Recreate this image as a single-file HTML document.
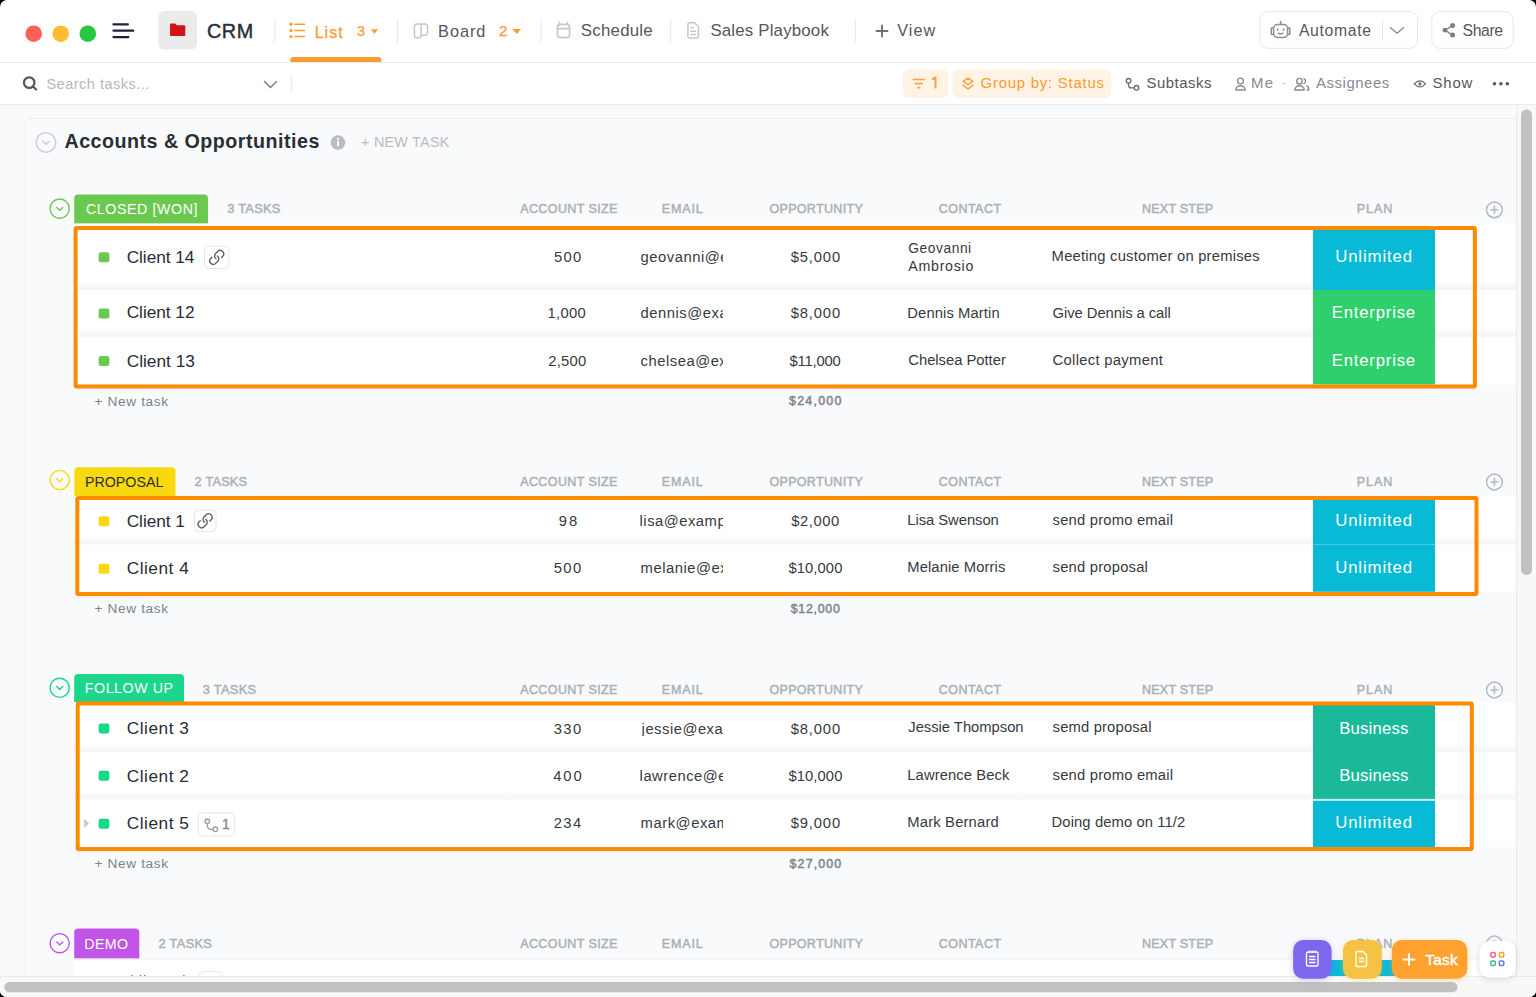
<!DOCTYPE html>
<html><head><meta charset="utf-8"><style>
html,body{margin:0;padding:0;width:1536px;height:997px;overflow:hidden;background:#000;}
#win{position:absolute;left:0;top:0;width:1536px;height:997px;background:#fff;border-radius:7px;overflow:hidden;font-family:"Liberation Sans",sans-serif;}
.t{position:absolute;line-height:1;white-space:nowrap;}
.a{position:absolute;}
svg{position:absolute;overflow:visible;}
</style></head><body><div id="win">
<svg class="a" style="left:0;top:0" width="1536" height="997" viewBox="0 0 1536 997"><defs><linearGradient id="sepg" x1="0" y1="0" x2="0" y2="1"><stop offset="0" stop-color="#f5f5f6" stop-opacity="0"/><stop offset="0.85" stop-color="#f6f6f7" stop-opacity="1"/><stop offset="1" stop-color="#f5f5f6" stop-opacity="1"/></linearGradient></defs><rect x="0" y="105" width="1536" height="892" fill="#f9fafb"/><rect x="0" y="62" width="1536" height="1" fill="#e8eaed"/><rect x="0" y="104" width="1536" height="1" fill="#e9ebee"/><rect x="25" y="118.5" width="1505" height="900" rx="5" fill="#f9fafb" stroke="#eceef1" stroke-width="1"/><circle cx="33.7" cy="33.7" r="8.3" fill="#ff5f57"/><circle cx="60.7" cy="33.7" r="8.3" fill="#febc2e"/><circle cx="87.8" cy="33.7" r="8.3" fill="#28c840"/><g stroke="#1f2040" stroke-width="2.3" stroke-linecap="round"><line x1="113.5" y1="24.4" x2="127.8" y2="24.4"/><line x1="113.5" y1="30.7" x2="133.2" y2="30.7"/><line x1="113.5" y1="37.1" x2="128.3" y2="37.1"/></g><rect x="158.2" y="10.7" width="38.8" height="38.7" rx="6" fill="#ebebeb"/><path d="M170 24.5 a1 1 0 0 1 1-1 h4.2 l1.6 1.8 h7.5 a1 1 0 0 1 1 1 v8.8 a1 1 0 0 1 -1 1 h-13.3 a1 1 0 0 1 -1-1z" fill="#d21414"/><rect x="274.3" y="19.3" width="1" height="23.5" fill="#e6e8eb"/><rect x="397.1" y="19.3" width="1" height="23.5" fill="#e6e8eb"/><rect x="540.6" y="19.3" width="1" height="23.5" fill="#e6e8eb"/><rect x="670.2" y="19.3" width="1" height="23.5" fill="#e6e8eb"/><rect x="854.8" y="19.3" width="1" height="23.5" fill="#e6e8eb"/><g fill="#fd9a2e"><circle cx="291" cy="24.2" r="1.6"/><circle cx="291" cy="30.5" r="1.6"/><circle cx="291" cy="36.5" r="1.6"/></g><g stroke="#fd9a2e" stroke-width="1.6" stroke-linecap="round"><line x1="295" y1="24.2" x2="304.5" y2="24.2"/><line x1="295" y1="30.5" x2="304.5" y2="30.5"/><line x1="295" y1="36.5" x2="304.5" y2="36.5"/></g><path d="M370.7 29.2 h7.4 l-3.7 4.6z" fill="#fd9a2e"/><path d="M512.4 29.0 h8.7 l-4.35 4.9z" fill="#fd9a2e"/><path d="M290.4 62 v-2 a3 3 0 0 1 3-3 h84.9 a3 3 0 0 1 3 3 v2z" fill="#fd9a2e"/><g fill="none" stroke="#c3c7ce" stroke-width="1.5" stroke-linejoin="round"><path d="M414.4 26.3 a2.4 2.4 0 0 1 2.4-2.4 h8.3 a2.4 2.4 0 0 1 2.4 2.4 v6.5 a2.4 2.4 0 0 1 -2.4 2.4 h-4 v0.3 a2.2 2.2 0 0 1 -2.2 2.2 h-2.1 a2.4 2.4 0 0 1 -2.4 -2.4z"/><path d="M421.1 23.9 v11.6"/></g><g fill="none" stroke="#c3c7ce" stroke-width="1.6" stroke-linejoin="round" stroke-linecap="round"><rect x="557.4" y="24.4" width="12.2" height="13.2" rx="3"/><path d="M557.4 28.6 h12.2"/><path d="M559.5 22.4 v2 M567.4 22.4 v2"/></g><g fill="none" stroke="#c3c7ce" stroke-width="1.5" stroke-linejoin="round" stroke-linecap="round"><path d="M689.9 22.8 h4.6 l4 4 v9.2 a2 2 0 0 1 -2 2 h-6.6 a2 2 0 0 1 -2 -2 v-11.2 a2 2 0 0 1 2 -2z"/><path d="M690.9 27.7 h2.4 M690.9 31.2 h4.6 M690.9 34.5 h4.6"/></g><g stroke="#6b6f76" stroke-width="1.9" stroke-linecap="round"><line x1="876.5" y1="31" x2="887.5" y2="31"/><line x1="882" y1="25.5" x2="882" y2="36.5"/></g><rect x="1259.9" y="11.6" width="157.6" height="36.7" rx="8" fill="#fff" stroke="#e6e8eb"/><rect x="1382" y="19.5" width="1" height="20.5" fill="#e6e8eb"/><path d="M1390.5 27.8 l6.5 5.5 l6.5 -5.5" fill="none" stroke="#878b92" stroke-width="1.4" stroke-linecap="round" stroke-linejoin="round"/><g fill="none" stroke="#8a8e95" stroke-width="1.5" stroke-linejoin="round" stroke-linecap="round"><rect x="1273.6" y="24.6" width="14" height="12.8" rx="3.8"/><path d="M1280.6 24.6 v-3"/><path d="M1278.4 33.2 q2.2 1.6 4.4 0"/><path d="M1273.2 27.8 h-1 a0.9 0.9 0 0 0 -0.9 0.9 v5 a0.9 0.9 0 0 0 0.9 0.9 h1 M1288 27.8 h1 a0.9 0.9 0 0 1 0.9 0.9 v5 a0.9 0.9 0 0 1 -0.9 0.9 h-1"/></g><g fill="#8a8e95"><circle cx="1277.7" cy="29.7" r="1.1"/><circle cx="1283.6" cy="29.7" r="1.1"/></g><rect x="1431.8" y="11.6" width="81.4" height="36.7" rx="8" fill="#fff" stroke="#e6e8eb"/><g fill="#7d8086"><circle cx="1452.6" cy="25.4" r="2.5"/><circle cx="1445" cy="30.2" r="2.4"/><circle cx="1452.6" cy="35.1" r="2.5"/></g><path d="M1452.6 25.4 L1445 30.2 L1452.6 35.1" fill="none" stroke="#7d8086" stroke-width="1.3"/><g fill="none" stroke="#54575d" stroke-width="2.2" stroke-linecap="round"><circle cx="29.2" cy="82.6" r="5.3"/><line x1="33.2" y1="86.7" x2="36.2" y2="89.5"/></g><path d="M264.5 81.5 l6 6 l6 -6" fill="none" stroke="#7c8087" stroke-width="1.5" stroke-linecap="round" stroke-linejoin="round"/><rect x="290.8" y="74.2" width="1" height="18.7" fill="#e6e8eb"/><rect x="902.5" y="69.4" width="45.5" height="28.7" rx="6" fill="#fff3e5"/><rect x="952.5" y="69.4" width="158.7" height="28.7" rx="6" fill="#fff3e5"/><g stroke="#fda245" stroke-width="1.7" stroke-linecap="round"><line x1="913.4" y1="79.5" x2="924.2" y2="79.5"/><line x1="915.4" y1="83.6" x2="922.2" y2="83.6"/><line x1="918" y1="87.6" x2="919.6" y2="87.6"/></g><path d="M932.9 79 l2.6 -1.5 v10" fill="none" stroke="#fda245" stroke-width="2.1" stroke-linecap="round" stroke-linejoin="round"/><g fill="none" stroke="#fda245" stroke-width="1.6" stroke-linejoin="round" stroke-linecap="round"><path d="M968 78.1 l5 3.3 l-5 3.3 l-5 -3.3z"/><path d="M963 85.3 l5 3.6 l5 -3.6"/></g><g fill="none" stroke="#6b6f76" stroke-width="1.4" stroke-linecap="round"><circle cx="1128.5" cy="80.8" r="2.3"/><circle cx="1136.5" cy="87.8" r="2.3"/><path d="M1128.5 83.1 v1.8 a3 3 0 0 0 3 3 h2.7"/></g><g fill="none" stroke="#878b92" stroke-width="1.4"><circle cx="1240.5" cy="81" r="2.9"/><path d="M1235.8 90 a4.7 4.2 0 0 1 9.4 0z" stroke-linejoin="round"/></g><rect x="1282" y="83" width="4" height="1.2" fill="#d0d3d8"/><g fill="none" stroke="#878b92" stroke-width="1.4" stroke-linejoin="round"><circle cx="1299.5" cy="81.2" r="2.8"/><path d="M1294.8 90 a4.7 4.2 0 0 1 9.4 0z"/><path d="M1303.5 78.5 a2.8 2.8 0 0 1 0 5.4 M1306.2 85.6 a4.2 4 0 0 1 2.5 4.4 h-2"/></g><g fill="none" stroke="#6b6f76" stroke-width="1.3"><path d="M1414.2 83.9 q5.7 -6 11.4 0 q-5.7 6 -11.4 0z"/><circle cx="1419.9" cy="83.9" r="1.6" fill="#6b6f76" stroke="none"/></g><g fill="#54575d"><circle cx="1494.5" cy="83.7" r="1.8"/><circle cx="1500.9" cy="83.7" r="1.8"/><circle cx="1507.3" cy="83.7" r="1.8"/></g><circle cx="46" cy="142.4" r="9.8" fill="none" stroke="#c8ccd3" stroke-width="1.4"/><path d="M42.8 141.3 l3.2 3 l3.2 -3" fill="none" stroke="#c8ccd3" stroke-width="1.3" stroke-linecap="round"/><circle cx="338" cy="142.6" r="7.3" fill="#b9bcc2"/><rect x="337.1" y="141" width="1.9" height="5.2" fill="#fff"/><circle cx="338" cy="138.9" r="1.1" fill="#fff"/><circle cx="59.7" cy="208.6" r="9.6" fill="none" stroke="#6bc950" stroke-width="1.4"/><path d="M56.7 207.4 l3 2.9 l3 -2.9" fill="none" stroke="#6bc950" stroke-width="1.4" stroke-linecap="round"/><path d="M74.2 223.8 v-25.30000000000001 a4 4 0 0 1 4-4 h125.80000000000001 a4 4 0 0 1 4 4 v25.30000000000001z" fill="#6bc950"/><g fill="none" stroke="#b4b9c1" stroke-width="1.5"><circle cx="1494.4" cy="209.8" r="7.9"/><path d="M1490.4 209.8 h8 M1494.4 205.8 v8"/></g><circle cx="59.7" cy="480.0" r="9.6" fill="none" stroke="#f8d90f" stroke-width="1.4"/><path d="M56.7 478.8 l3 2.9 l3 -2.9" fill="none" stroke="#f8d90f" stroke-width="1.4" stroke-linecap="round"/><path d="M74.3 496.0 v-24.80000000000001 a4 4 0 0 1 4-4 h93.2 a4 4 0 0 1 4 4 v24.80000000000001z" fill="#f8d90f"/><g fill="none" stroke="#b4b9c1" stroke-width="1.5"><circle cx="1494.4" cy="482.0" r="7.9"/><path d="M1490.4 482.0 h8 M1494.4 478.0 v8"/></g><circle cx="59.7" cy="687.8" r="9.6" fill="none" stroke="#1bd68b" stroke-width="1.4"/><path d="M56.7 686.5999999999999 l3 2.9 l3 -2.9" fill="none" stroke="#1bd68b" stroke-width="1.4" stroke-linecap="round"/><path d="M74.2 702.0 v-24.100000000000023 a4 4 0 0 1 4-4 h101.8 a4 4 0 0 1 4 4 v24.100000000000023z" fill="#1bd68b"/><g fill="none" stroke="#b4b9c1" stroke-width="1.5"><circle cx="1494.4" cy="690.0" r="7.9"/><path d="M1490.4 690.0 h8 M1494.4 686.0 v8"/></g><circle cx="59.7" cy="943.2" r="9.6" fill="none" stroke="#c155e8" stroke-width="1.4"/><path d="M56.7 942.0 l3 2.9 l3 -2.9" fill="none" stroke="#c155e8" stroke-width="1.4" stroke-linecap="round"/><path d="M74.2 958.6 v-26.0 a4 4 0 0 1 4-4 h57.10000000000001 a4 4 0 0 1 4 4 v26.0z" fill="#c155e8"/><g fill="none" stroke="#b4b9c1" stroke-width="1.5"><circle cx="1494.4" cy="944.0" r="7.9"/><path d="M1490.4 944.0 h8 M1494.4 940.0 v8"/></g><rect x="74.2" y="223.5" width="1441.8" height="161.0" fill="#fff"/><rect x="1313" y="226" width="122" height="64" fill="#08bad5"/><rect x="1313" y="290" width="122" height="47" fill="#30cf6e"/><rect x="1313" y="337" width="122" height="47.5" fill="#30cf6e"/><rect x="74" y="280" width="1239" height="10" fill="url(#sepg)"/><rect x="1435" y="280" width="81" height="10" fill="url(#sepg)"/><rect x="74" y="327" width="1239" height="10" fill="url(#sepg)"/><rect x="1435" y="327" width="81" height="10" fill="url(#sepg)"/><rect x="74.2" y="496.0" width="1441.8" height="95.79999999999995" fill="#fff"/><rect x="1313" y="496.0" width="122" height="48.5" fill="#08bad5"/><rect x="1313" y="544.5" width="122" height="47.299999999999955" fill="#08bad5"/><rect x="74" y="534.5" width="1239" height="10" fill="url(#sepg)"/><rect x="1435" y="534.5" width="81" height="10" fill="url(#sepg)"/><rect x="74.2" y="702.0" width="1441.8" height="145.0" fill="#fff"/><rect x="1313" y="702.0" width="122" height="50.0" fill="#1ab99a"/><rect x="1313" y="752" width="122" height="47.5" fill="#1ab99a"/><rect x="1313" y="799.5" width="122" height="47.5" fill="#08bad5"/><rect x="74" y="742" width="1239" height="10" fill="url(#sepg)"/><rect x="1435" y="742" width="81" height="10" fill="url(#sepg)"/><rect x="74" y="789.5" width="1239" height="10" fill="url(#sepg)"/><rect x="1435" y="789.5" width="81" height="10" fill="url(#sepg)"/><rect x="1313" y="798.9" width="122" height="2" fill="#c9eef0"/><rect x="98.6" y="252.3" width="10.8" height="10" rx="2.3" fill="#6bc950"/><rect x="98.6" y="308.6" width="10.8" height="10" rx="2.3" fill="#6bc950"/><rect x="98.6" y="356.0" width="10.8" height="10" rx="2.3" fill="#6bc950"/><rect x="98.6" y="516.3" width="10.8" height="10" rx="2.3" fill="#f8d90f"/><rect x="98.6" y="563.8" width="10.8" height="10" rx="2.3" fill="#f8d90f"/><rect x="98.6" y="723.4" width="10.8" height="10" rx="2.3" fill="#1bd68b"/><rect x="98.6" y="770.8" width="10.8" height="10" rx="2.3" fill="#1bd68b"/><rect x="98.6" y="818.7" width="10.8" height="10" rx="2.3" fill="#1bd68b"/><rect x="204.5" y="246.2" width="24.400000000000006" height="22.400000000000034" rx="4" fill="#fff" stroke="#e4e6ea"/><g transform="translate(208.30,249.00) scale(0.70) matrix(0,-1,-1,0,24,24)" fill="none" stroke="#5a5d63" stroke-width="1.95" stroke-linecap="round" stroke-linejoin="round"><path d="M10 13a5 5 0 0 0 7.54.54l3-3a5 5 0 0 0-7.07-7.07l-1.72 1.71"/><path d="M14 11a5 5 0 0 0-7.54-.54l-3 3a5 5 0 0 0 7.07 7.07l1.71-1.71"/></g><rect x="194.2" y="510.1" width="21.80000000000001" height="21.399999999999977" rx="4" fill="#fff" stroke="#e4e6ea"/><g transform="translate(196.70,512.40) scale(0.70) matrix(0,-1,-1,0,24,24)" fill="none" stroke="#5a5d63" stroke-width="1.95" stroke-linecap="round" stroke-linejoin="round"><path d="M10 13a5 5 0 0 0 7.54.54l3-3a5 5 0 0 0-7.07-7.07l-1.72 1.71"/><path d="M14 11a5 5 0 0 0-7.54-.54l-3 3a5 5 0 0 0 7.07 7.07l1.71-1.71"/></g><rect x="198.25" y="812.9" width="36.5" height="23.2" rx="5" fill="#fff" stroke="#e4e6ea"/><g fill="none" stroke="#9a9da3" stroke-width="1.3" stroke-linecap="round"><circle cx="207.3" cy="821.3" r="2.3"/><circle cx="215.3" cy="829.3" r="2.3"/><path d="M207.3 823.6 v2.2 a3.5 3.5 0 0 0 3.5 3.5 h2.2"/></g><path d="M84.3 818.8 l4.7 4.6 l-4.7 4.7z" fill="#c4c8ce"/><rect x="74.2" y="960" width="1441.8" height="20" fill="#fff"/><rect x="74.2" y="958.6" width="1441.8" height="1.4" fill="#f3f4f6"/><rect x="1313" y="960" width="122" height="20" fill="#08bad5"/><g fill="#6b6f76"><rect x="131.5" y="975" width="1.3" height="2"/><rect x="139.8" y="975" width="1.3" height="2"/><rect x="144" y="975" width="1.3" height="2"/><rect x="183.2" y="975" width="1.3" height="2"/></g><rect x="199.5" y="971.5" width="22.5" height="20" rx="4" fill="#fff" stroke="#e4e6ea"/><defs><linearGradient id="shg" x1="0" y1="0" x2="0" y2="1"><stop offset="0" stop-color="#ededee" stop-opacity="1"/><stop offset="1" stop-color="#f9fafb" stop-opacity="0"/></linearGradient></defs><rect x="76" y="388.0" width="1400" height="5" fill="url(#shg)"/><rect x="77" y="595.5" width="1401" height="5" fill="url(#shg)"/><rect x="77" y="850.5" width="1396" height="5" fill="url(#shg)"/><rect x="75.6" y="228.0" width="1399.3000000000002" height="158.39999999999998" rx="1.2" fill="none" stroke="#ff8a00" stroke-width="4"/><rect x="77.3" y="497.9" width="1399.2" height="96.10000000000002" rx="1.2" fill="none" stroke="#ff8a00" stroke-width="4"/><rect x="77.7" y="703.6" width="1394.1" height="145.29999999999995" rx="1.2" fill="none" stroke="#ff8a00" stroke-width="4"/></svg>
<div class="t" style="left:207.00px;top:21.63px;font-size:19.81px;letter-spacing:0.553px;color:#2a2e34;-webkit-text-stroke:0.45px currentColor;">CRM</div>
<div class="t" style="left:314.70px;top:23.52px;font-size:16.05px;letter-spacing:1.002px;color:#fd9a2e;-webkit-text-stroke:0.25px currentColor;">List</div>
<div class="t" style="left:356.90px;top:23.53px;font-size:14.37px;letter-spacing:-0.100px;color:#fd9a2e;-webkit-text-stroke:0.25px currentColor;">3</div>
<div class="t" style="left:438.10px;top:23.18px;font-size:16.33px;letter-spacing:0.911px;color:#54575d;">Board</div>
<div class="t" style="left:499.00px;top:22.94px;font-size:15.07px;letter-spacing:0.300px;color:#fd9a2e;-webkit-text-stroke:0.25px currentColor;">2</div>
<div class="t" style="left:580.80px;top:22.71px;font-size:16.88px;letter-spacing:0.231px;color:#54575d;">Schedule</div>
<div class="t" style="left:710.40px;top:22.71px;font-size:16.88px;letter-spacing:0.171px;color:#54575d;">Sales Playbook</div>
<div class="t" style="left:897.30px;top:22.00px;font-size:16.19px;letter-spacing:1.006px;color:#54575d;">View</div>
<div class="t" style="left:1298.90px;top:22.85px;font-size:15.77px;letter-spacing:0.664px;color:#54575d;">Automate</div>
<div class="t" style="left:1462.60px;top:22.85px;font-size:15.77px;letter-spacing:-0.417px;color:#54575d;">Share</div>
<div class="t" style="left:46.40px;top:77.32px;font-size:14.51px;letter-spacing:0.502px;color:#b5b8bd;">Search tasks...</div>
<div class="t" style="left:980.60px;top:75.86px;font-size:14.93px;letter-spacing:0.759px;color:#fd9a2e;">Group by: Status</div>
<div class="t" style="left:1146.50px;top:75.86px;font-size:14.93px;letter-spacing:0.498px;color:#54575d;">Subtasks</div>
<div class="t" style="left:1251.10px;top:75.86px;font-size:14.93px;letter-spacing:1.270px;color:#878b92;">Me</div>
<div class="t" style="left:1316.00px;top:75.86px;font-size:14.93px;letter-spacing:0.552px;color:#878b92;">Assignees</div>
<div class="t" style="left:1432.60px;top:75.86px;font-size:14.93px;letter-spacing:0.817px;color:#54575d;">Show</div>
<div class="t" style="left:64.50px;top:132.25px;font-size:19.67px;letter-spacing:0.492px;color:#2a2e34;font-weight:700;">Accounts &amp; Opportunities</div>
<div class="t" style="left:361.00px;top:135.23px;font-size:14.37px;letter-spacing:0.253px;color:#b9bcc2;">+ NEW TASK</div>
<div class="t" style="left:85.90px;top:202.15px;font-size:14.23px;letter-spacing:0.598px;color:#ffffff;">CLOSED [WON]</div>
<div class="t" style="left:227.20px;top:203.23px;font-size:12.84px;letter-spacing:0.258px;color:#abafb6;-webkit-text-stroke:0.45px currentColor;">3 TASKS</div>
<div class="t" style="left:520.20px;top:203.37px;font-size:12.56px;letter-spacing:0.369px;color:#abafb6;-webkit-text-stroke:0.45px currentColor;">ACCOUNT SIZE</div>
<div class="t" style="left:661.80px;top:203.37px;font-size:12.56px;letter-spacing:0.806px;color:#abafb6;-webkit-text-stroke:0.45px currentColor;">EMAIL</div>
<div class="t" style="left:769.40px;top:203.37px;font-size:12.56px;letter-spacing:0.307px;color:#abafb6;-webkit-text-stroke:0.45px currentColor;">OPPORTUNITY</div>
<div class="t" style="left:938.80px;top:203.37px;font-size:12.56px;letter-spacing:0.426px;color:#abafb6;-webkit-text-stroke:0.45px currentColor;">CONTACT</div>
<div class="t" style="left:1142.00px;top:203.37px;font-size:12.56px;letter-spacing:0.206px;color:#abafb6;-webkit-text-stroke:0.45px currentColor;">NEXT STEP</div>
<div class="t" style="left:1356.80px;top:203.37px;font-size:12.56px;letter-spacing:0.928px;color:#abafb6;-webkit-text-stroke:0.45px currentColor;">PLAN</div>
<div class="t" style="left:85.00px;top:475.15px;font-size:14.23px;letter-spacing:0.011px;color:#2a2e34;">PROPOSAL</div>
<div class="t" style="left:194.60px;top:475.73px;font-size:12.84px;letter-spacing:0.158px;color:#abafb6;-webkit-text-stroke:0.45px currentColor;">2 TASKS</div>
<div class="t" style="left:520.20px;top:475.87px;font-size:12.56px;letter-spacing:0.369px;color:#abafb6;-webkit-text-stroke:0.45px currentColor;">ACCOUNT SIZE</div>
<div class="t" style="left:661.80px;top:475.87px;font-size:12.56px;letter-spacing:0.806px;color:#abafb6;-webkit-text-stroke:0.45px currentColor;">EMAIL</div>
<div class="t" style="left:769.40px;top:475.87px;font-size:12.56px;letter-spacing:0.307px;color:#abafb6;-webkit-text-stroke:0.45px currentColor;">OPPORTUNITY</div>
<div class="t" style="left:938.80px;top:475.87px;font-size:12.56px;letter-spacing:0.426px;color:#abafb6;-webkit-text-stroke:0.45px currentColor;">CONTACT</div>
<div class="t" style="left:1142.00px;top:475.87px;font-size:12.56px;letter-spacing:0.206px;color:#abafb6;-webkit-text-stroke:0.45px currentColor;">NEXT STEP</div>
<div class="t" style="left:1356.80px;top:475.87px;font-size:12.56px;letter-spacing:0.928px;color:#abafb6;-webkit-text-stroke:0.45px currentColor;">PLAN</div>
<div class="t" style="left:84.80px;top:681.45px;font-size:14.23px;letter-spacing:0.555px;color:#ffffff;">FOLLOW UP</div>
<div class="t" style="left:202.70px;top:683.73px;font-size:12.84px;letter-spacing:0.308px;color:#abafb6;-webkit-text-stroke:0.45px currentColor;">3 TASKS</div>
<div class="t" style="left:520.20px;top:683.87px;font-size:12.56px;letter-spacing:0.369px;color:#abafb6;-webkit-text-stroke:0.45px currentColor;">ACCOUNT SIZE</div>
<div class="t" style="left:661.80px;top:683.87px;font-size:12.56px;letter-spacing:0.806px;color:#abafb6;-webkit-text-stroke:0.45px currentColor;">EMAIL</div>
<div class="t" style="left:769.40px;top:683.87px;font-size:12.56px;letter-spacing:0.307px;color:#abafb6;-webkit-text-stroke:0.45px currentColor;">OPPORTUNITY</div>
<div class="t" style="left:938.80px;top:683.87px;font-size:12.56px;letter-spacing:0.426px;color:#abafb6;-webkit-text-stroke:0.45px currentColor;">CONTACT</div>
<div class="t" style="left:1142.00px;top:683.87px;font-size:12.56px;letter-spacing:0.206px;color:#abafb6;-webkit-text-stroke:0.45px currentColor;">NEXT STEP</div>
<div class="t" style="left:1356.80px;top:683.87px;font-size:12.56px;letter-spacing:0.928px;color:#abafb6;-webkit-text-stroke:0.45px currentColor;">PLAN</div>
<div class="t" style="left:84.30px;top:936.75px;font-size:14.23px;letter-spacing:0.368px;color:#ffffff;">DEMO</div>
<div class="t" style="left:158.50px;top:937.73px;font-size:12.84px;letter-spacing:0.308px;color:#abafb6;-webkit-text-stroke:0.45px currentColor;">2 TASKS</div>
<div class="t" style="left:520.20px;top:937.87px;font-size:12.56px;letter-spacing:0.369px;color:#abafb6;-webkit-text-stroke:0.45px currentColor;">ACCOUNT SIZE</div>
<div class="t" style="left:661.80px;top:937.87px;font-size:12.56px;letter-spacing:0.806px;color:#abafb6;-webkit-text-stroke:0.45px currentColor;">EMAIL</div>
<div class="t" style="left:769.40px;top:937.87px;font-size:12.56px;letter-spacing:0.307px;color:#abafb6;-webkit-text-stroke:0.45px currentColor;">OPPORTUNITY</div>
<div class="t" style="left:938.80px;top:937.87px;font-size:12.56px;letter-spacing:0.426px;color:#abafb6;-webkit-text-stroke:0.45px currentColor;">CONTACT</div>
<div class="t" style="left:1142.00px;top:937.87px;font-size:12.56px;letter-spacing:0.206px;color:#abafb6;-webkit-text-stroke:0.45px currentColor;">NEXT STEP</div>
<div class="t" style="left:1356.80px;top:937.87px;font-size:12.56px;letter-spacing:0.928px;color:#abafb6;-webkit-text-stroke:0.45px currentColor;">PLAN</div>
<div class="t" style="left:126.70px;top:248.85px;font-size:17.30px;letter-spacing:-0.068px;color:#292d34;">Client 14</div>
<div class="t" style="left:554.00px;top:250.08px;font-size:14.79px;letter-spacing:1.279px;color:#363a40;">500</div>
<div class="t" style="left:640.60px;top:250.08px;font-size:14.79px;letter-spacing:0.513px;color:#363a40;width:82.4px;overflow:hidden;">geovanni@example.com</div>
<div class="t" style="left:790.70px;top:250.08px;font-size:14.79px;letter-spacing:0.842px;color:#363a40;">$5,000</div>
<div class="t" style="left:1051.60px;top:248.88px;font-size:14.79px;letter-spacing:0.222px;color:#363a40;">Meeting customer on premises</div>
<div class="t" style="left:1335.20px;top:249.13px;font-size:16.74px;letter-spacing:0.895px;color:#ffffff;">Unlimited</div>
<div class="t" style="left:126.70px;top:304.35px;font-size:17.30px;letter-spacing:-0.043px;color:#292d34;">Client 12</div>
<div class="t" style="left:547.60px;top:305.58px;font-size:14.79px;letter-spacing:0.308px;color:#363a40;">1,000</div>
<div class="t" style="left:640.60px;top:305.58px;font-size:14.79px;letter-spacing:0.516px;color:#363a40;width:82.4px;overflow:hidden;">dennis@example.com</div>
<div class="t" style="left:790.70px;top:305.58px;font-size:14.79px;letter-spacing:0.842px;color:#363a40;">$8,000</div>
<div class="t" style="left:907.30px;top:305.58px;font-size:14.79px;letter-spacing:0.095px;color:#363a40;">Dennis Martin</div>
<div class="t" style="left:1052.60px;top:305.58px;font-size:14.79px;letter-spacing:-0.055px;color:#363a40;">Give Dennis a call</div>
<div class="t" style="left:1331.80px;top:304.63px;font-size:16.74px;letter-spacing:0.782px;color:#ffffff;">Enterprise</div>
<div class="t" style="left:126.70px;top:352.85px;font-size:17.30px;letter-spacing:-0.006px;color:#292d34;">Client 13</div>
<div class="t" style="left:548.30px;top:354.08px;font-size:14.79px;letter-spacing:0.233px;color:#363a40;">2,500</div>
<div class="t" style="left:640.60px;top:354.08px;font-size:14.79px;letter-spacing:0.512px;color:#363a40;width:82.4px;overflow:hidden;">chelsea@example.com</div>
<div class="t" style="left:789.50px;top:354.08px;font-size:14.79px;letter-spacing:-0.185px;color:#363a40;">$11,000</div>
<div class="t" style="left:908.30px;top:353.18px;font-size:14.79px;letter-spacing:-0.019px;color:#363a40;">Chelsea Potter</div>
<div class="t" style="left:1052.60px;top:353.18px;font-size:14.79px;letter-spacing:0.302px;color:#363a40;">Collect payment</div>
<div class="t" style="left:1331.80px;top:353.13px;font-size:16.74px;letter-spacing:0.782px;color:#ffffff;">Enterprise</div>
<div class="t" style="left:126.70px;top:512.55px;font-size:17.30px;letter-spacing:-0.061px;color:#292d34;">Client 1</div>
<div class="t" style="left:558.70px;top:513.78px;font-size:14.79px;letter-spacing:2.079px;color:#363a40;">98</div>
<div class="t" style="left:639.60px;top:513.78px;font-size:14.79px;letter-spacing:0.495px;color:#363a40;width:83.4px;overflow:hidden;">lisa@example.com</div>
<div class="t" style="left:791.20px;top:513.78px;font-size:14.79px;letter-spacing:0.562px;color:#363a40;">$2,000</div>
<div class="t" style="left:907.30px;top:513.28px;font-size:14.79px;letter-spacing:-0.046px;color:#363a40;">Lisa Swenson</div>
<div class="t" style="left:1052.60px;top:513.28px;font-size:14.79px;letter-spacing:0.193px;color:#363a40;">send promo email</div>
<div class="t" style="left:1335.20px;top:512.83px;font-size:16.74px;letter-spacing:0.895px;color:#ffffff;">Unlimited</div>
<div class="t" style="left:126.70px;top:559.75px;font-size:17.30px;letter-spacing:0.496px;color:#292d34;">Client 4</div>
<div class="t" style="left:553.70px;top:560.98px;font-size:14.79px;letter-spacing:1.429px;color:#363a40;">500</div>
<div class="t" style="left:640.60px;top:560.98px;font-size:14.79px;letter-spacing:0.515px;color:#363a40;width:82.4px;overflow:hidden;">melanie@example.com</div>
<div class="t" style="left:788.40px;top:560.98px;font-size:14.79px;letter-spacing:0.098px;color:#363a40;">$10,000</div>
<div class="t" style="left:907.30px;top:560.48px;font-size:14.79px;letter-spacing:0.082px;color:#363a40;">Melanie Morris</div>
<div class="t" style="left:1052.60px;top:560.48px;font-size:14.79px;letter-spacing:0.202px;color:#363a40;">send proposal</div>
<div class="t" style="left:1335.20px;top:560.03px;font-size:16.74px;letter-spacing:0.895px;color:#ffffff;">Unlimited</div>
<div class="t" style="left:126.70px;top:720.35px;font-size:17.30px;letter-spacing:0.525px;color:#292d34;">Client 3</div>
<div class="t" style="left:553.70px;top:721.58px;font-size:14.79px;letter-spacing:1.429px;color:#363a40;">330</div>
<div class="t" style="left:641.60px;top:721.58px;font-size:14.79px;letter-spacing:0.499px;color:#363a40;width:81.4px;overflow:hidden;">jessie@example.com</div>
<div class="t" style="left:790.70px;top:721.58px;font-size:14.79px;letter-spacing:0.842px;color:#363a40;">$8,000</div>
<div class="t" style="left:908.30px;top:720.48px;font-size:14.79px;letter-spacing:-0.023px;color:#363a40;">Jessie Thompson</div>
<div class="t" style="left:1052.60px;top:720.48px;font-size:14.79px;letter-spacing:0.161px;color:#363a40;">semd proposal</div>
<div class="t" style="left:1339.20px;top:720.63px;font-size:16.74px;letter-spacing:0.181px;color:#ffffff;">Business</div>
<div class="t" style="left:126.70px;top:767.65px;font-size:17.30px;letter-spacing:0.525px;color:#292d34;">Client 2</div>
<div class="t" style="left:553.20px;top:768.88px;font-size:14.79px;letter-spacing:1.929px;color:#363a40;">400</div>
<div class="t" style="left:639.60px;top:768.88px;font-size:14.79px;letter-spacing:0.508px;color:#363a40;width:83.4px;overflow:hidden;">lawrence@example.com</div>
<div class="t" style="left:788.40px;top:768.88px;font-size:14.79px;letter-spacing:0.098px;color:#363a40;">$10,000</div>
<div class="t" style="left:907.30px;top:767.78px;font-size:14.79px;letter-spacing:0.078px;color:#363a40;">Lawrence Beck</div>
<div class="t" style="left:1052.60px;top:767.78px;font-size:14.79px;letter-spacing:0.193px;color:#363a40;">send promo email</div>
<div class="t" style="left:1339.20px;top:767.93px;font-size:16.74px;letter-spacing:0.181px;color:#ffffff;">Business</div>
<div class="t" style="left:126.70px;top:815.05px;font-size:17.30px;letter-spacing:0.525px;color:#292d34;">Client 5</div>
<div class="t" style="left:553.70px;top:816.28px;font-size:14.79px;letter-spacing:1.429px;color:#363a40;">234</div>
<div class="t" style="left:640.60px;top:816.28px;font-size:14.79px;letter-spacing:0.542px;color:#363a40;width:82.4px;overflow:hidden;">mark@example.com</div>
<div class="t" style="left:790.70px;top:816.28px;font-size:14.79px;letter-spacing:0.842px;color:#363a40;">$9,000</div>
<div class="t" style="left:907.30px;top:815.48px;font-size:14.79px;letter-spacing:0.171px;color:#363a40;">Mark Bernard</div>
<div class="t" style="left:1051.60px;top:815.48px;font-size:14.79px;letter-spacing:0.094px;color:#363a40;">Doing demo on 11/2</div>
<div class="t" style="left:1335.20px;top:815.33px;font-size:16.74px;letter-spacing:0.895px;color:#ffffff;">Unlimited</div>
<div class="t" style="left:908.30px;top:241.51px;font-size:13.81px;letter-spacing:0.543px;color:#363a40;">Geovanni</div>
<div class="t" style="left:908.30px;top:258.65px;font-size:14.23px;letter-spacing:0.708px;color:#363a40;">Ambrosio</div>
<div class="t" style="left:94.50px;top:395.02px;font-size:13.67px;letter-spacing:0.633px;color:#7c828d;">+ New task</div>
<div class="t" style="left:789.00px;top:395.09px;font-size:12.42px;letter-spacing:1.259px;color:#7c828d;-webkit-text-stroke:0.45px currentColor;">$24,000</div>
<div class="t" style="left:94.50px;top:602.22px;font-size:13.67px;letter-spacing:0.633px;color:#7c828d;">+ New task</div>
<div class="t" style="left:790.70px;top:603.09px;font-size:12.42px;letter-spacing:0.709px;color:#7c828d;-webkit-text-stroke:0.45px currentColor;">$12,000</div>
<div class="t" style="left:94.50px;top:857.02px;font-size:13.67px;letter-spacing:0.633px;color:#7c828d;">+ New task</div>
<div class="t" style="left:789.60px;top:858.19px;font-size:12.42px;letter-spacing:1.126px;color:#7c828d;-webkit-text-stroke:0.45px currentColor;">$27,000</div>
<div class="t" style="left:222.00px;top:816.97px;font-size:14.09px;letter-spacing:-2.900px;color:#878b92;-webkit-text-stroke:0.45px currentColor;">1</div>
<div class="t" style="left:1425.20px;top:951.91px;font-size:15.35px;letter-spacing:0.316px;color:#ffffff;-webkit-text-stroke:0.45px currentColor;z-index:6;">Task</div>
<svg class="a" style="left:0;top:0;z-index:5" width="1536" height="997" viewBox="0 0 1536 997"><rect x="1516.5" y="105" width="19.5" height="871" fill="#f8f8f8"/><rect x="1516" y="105" width="1" height="871" fill="#ececec"/><rect x="1521" y="109.4" width="11" height="465.6" rx="5.5" fill="#c1c1c1"/><rect x="0" y="976" width="1536" height="21" fill="#f8f8f8"/><rect x="0" y="976" width="1536" height="1" fill="#ececec"/><rect x="4.3" y="982" width="1453.2" height="10.3" rx="5.15" fill="#c1c1c1"/><defs><filter id="sh" x="-50%" y="-50%" width="200%" height="200%"><feGaussianBlur stdDeviation="3"/></filter></defs><rect x="1293.2" y="941" width="38.4" height="38.8" rx="10" fill="#7b68ee" opacity="0.35" filter="url(#sh)"/><rect x="1293.2" y="940" width="38.4" height="38.8" rx="10" fill="#7b68ee"/><g fill="none" stroke="#fff" stroke-width="1.4"><rect x="1306.5" y="952" width="11.5" height="14" rx="1.5"/><path d="M1309 956.5 h6.5 M1309 959.5 h6.5 M1309 962.5 h6.5 M1309.5 950.5 v2.5 M1312.2 950.5 v2.5 M1315 950.5 v2.5"/></g><rect x="1343" y="941" width="38.7" height="38.8" rx="10" fill="#f5c243" opacity="0.35" filter="url(#sh)"/><rect x="1343" y="940" width="38.7" height="38.8" rx="10" fill="#f5c243"/><g fill="none" stroke="#fff" stroke-width="1.4" stroke-linejoin="round"><path d="M1357 951.5 h6 l3.5 3.5 v10.5 a1 1 0 0 1 -1 1 h-8.5 a1 1 0 0 1 -1-1 v-13 a1 1 0 0 1 1-1z"/><path d="M1359 958.5 h5 M1359 961.5 h5"/></g><rect x="1391.8" y="941" width="75.5" height="38.8" rx="10" fill="#ffa12f" opacity="0.35" filter="url(#sh)"/><rect x="1391.8" y="940" width="75.5" height="38.8" rx="10" fill="#ffa12f"/><g stroke="#fff" stroke-width="2" stroke-linecap="round"><line x1="1403.5" y1="959.4" x2="1414.5" y2="959.4"/><line x1="1409" y1="953.9" x2="1409" y2="964.9"/></g><rect x="1479.4" y="942.5" width="36.4" height="36.4" rx="10" fill="#000" opacity="0.13" filter="url(#sh)"/><rect x="1479.4" y="941" width="36.4" height="36.4" rx="10" fill="#fff"/><g fill="none" stroke-width="1.5"><rect x="1490.8" y="952.5" width="4.5" height="4.5" rx="1.2" stroke="#f06292"/><rect x="1499.3" y="952.5" width="4.5" height="4.5" rx="1.2" stroke="#ffa12f"/><rect x="1490.8" y="961" width="4.5" height="4.5" rx="1.2" stroke="#3db88b"/><rect x="1499.3" y="961" width="4.5" height="4.5" rx="1.2" stroke="#5b7bf0"/></g></svg>
</div></body></html>
